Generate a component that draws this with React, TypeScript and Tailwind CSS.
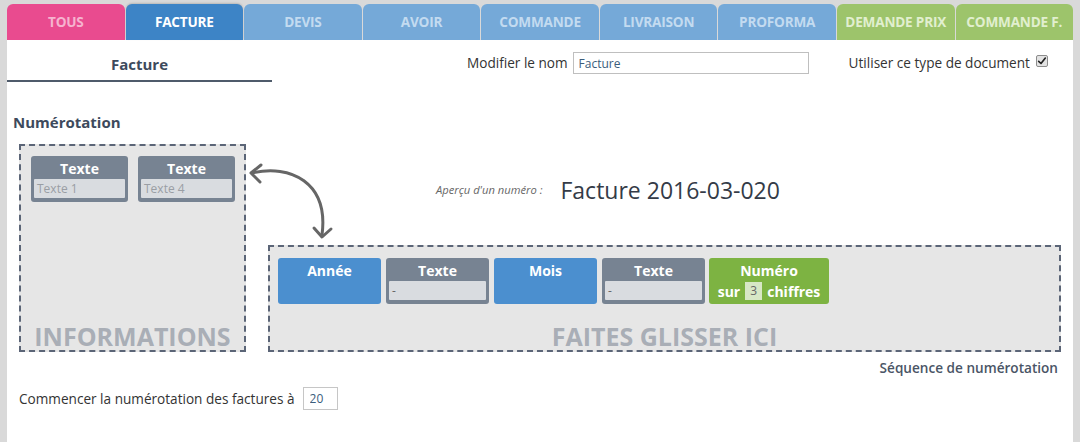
import React from 'react';

const tabs = [
  { label: 'TOUS', cls: 'bg-[#e94b8f] text-[#f6b3cf]' },
  { label: 'FACTURE', cls: 'bg-[#3d84c6] text-white shadow-[0_-1px_2px_rgba(0,0,0,0.15)] -mt-px' },
  { label: 'DEVIS', cls: 'bg-[#75a9d8] text-[#c3dbf0]' },
  { label: 'AVOIR', cls: 'bg-[#75a9d8] text-[#c3dbf0]' },
  { label: 'COMMANDE', cls: 'bg-[#75a9d8] text-[#c3dbf0]' },
  { label: 'LIVRAISON', cls: 'bg-[#75a9d8] text-[#c3dbf0]' },
  { label: 'PROFORMA', cls: 'bg-[#75a9d8] text-[#c3dbf0]' },
  { label: 'DEMANDE PRIX', cls: 'bg-[#9dc46b] text-[#e1efcf]' },
  { label: 'COMMANDE F.', cls: 'bg-[#9dc46b] text-[#e1efcf]' },
];

const TextTile: React.FC<{ value: string; width: string; muted?: boolean }> = ({ value, width, muted }) => (
  <div className={`${width} h-[46px] bg-[#778392] rounded-[3px] px-[3px] pt-[4px] flex flex-col`}>
    <div className="text-white font-bold text-[14px] leading-[17px] text-center">Texte</div>
    <div className={`mt-[2px] h-[19px] bg-[#d9dce0] rounded-[1px] px-[3px] text-[12px] leading-[19px] ${muted ? 'text-[#9a9ea4]' : 'text-[#666]'}`}>
      {value}
    </div>
  </div>
);

const BlueTile: React.FC<{ label: string }> = ({ label }) => (
  <div className="w-[103px] h-[46px] bg-[#4b8fcf] rounded-[3px] pt-[4px] text-white font-bold text-[14px] leading-[17px] text-center">
    {label}
  </div>
);

const App: React.FC = () => {
  return (
    <div className="relative w-[1080px] h-[442px] bg-[#d9d9d9] px-[7px] pt-[4px] font-['Open_Sans',sans-serif] overflow-hidden">
      {/* Tabs */}
      <div className="flex gap-px h-[36px] items-end">
        {tabs.map(t => (
          <div
            key={t.label}
            className={`flex-1 h-[36px] rounded-t-[6px] flex items-center justify-center font-bold text-[13.6px] tracking-[-0.2px] ${t.cls}`}
          >
            {t.label}
          </div>
        ))}
      </div>

      {/* Panel */}
      <div className="bg-white h-[402px] text-[#333]">
        {/* Header row */}
        <div className="flex items-start h-[42px]">
          <div className="w-[265px] h-[42px] flex items-center justify-center border-b-[2px] border-[#4f5b6b] text-[15px] font-bold text-[#3d4a5c] pt-[8px]">
            Facture
          </div>
          <div className="ml-[195px] flex items-center text-[13.6px] mt-[12px]">
            <span>Modifier le nom</span>
            <input
              readOnly
              value="Facture"
              className="ml-[5px] w-[236px] h-[22px] border border-[#bfbfbf] px-[5px] text-[12px] text-[#3b5d7c] outline-none"
            />
            <span className="ml-[40px]">Utiliser ce type de document</span>
            <span className="ml-[6px] w-[12px] h-[12px] border border-[#8c8c8c] rounded-[2px] bg-[#e3e3e3] flex items-center justify-center -mt-[4px]">
              <svg viewBox="0 0 12 12" className="w-[10px] h-[10px]">
                <path d="M2 6.5 L4.8 9 L10 2.5" stroke="#222" strokeWidth="2" fill="none" strokeLinecap="round" strokeLinejoin="round" />
              </svg>
            </span>
          </div>
        </div>

        <div className="pl-[6px] pt-[30px] text-[15px] font-bold text-[#3d4a5c] leading-[20px]">Numérotation</div>

        {/* Main area */}
        <div className="flex mt-[12px] pl-[12px] pr-[12px]">
          <div className="w-[227px] h-[208px] bg-[#e6e6e6] border-2 border-dashed border-[#5b6577] flex flex-col">
            <div className="flex gap-[10px] pl-[10px] pt-[10px]">
              <TextTile value="Texte 1" width="w-[97px]" muted />
              <TextTile value="Texte 4" width="w-[97px]" muted />
            </div>
            <div className="mt-auto pb-[1px] text-center text-[25px] font-bold text-[#a9aeb6] leading-[26px]">INFORMATIONS</div>
          </div>

          <div className="flex-1 ml-[22px] flex flex-col">
            <div className="flex items-center h-[101px] pl-[168px] pb-[8px]">
              <span className="italic text-[11.2px] text-[#666]">Aperçu d'un numéro :</span>
              <span className="ml-[18px] text-[23px] text-[#343b47]">Facture 2016-03-020</span>
            </div>
            <div className="h-[107px] bg-[#e6e6e6] border-2 border-dashed border-[#5b6577] flex flex-col">
              <div className="flex gap-[5px] pl-[8px] pt-[11px]">
                <BlueTile label="Année" />
                <TextTile value="-" width="w-[103px]" />
                <BlueTile label="Mois" />
                <TextTile value="-" width="w-[103px]" />
                <div className="w-[120px] h-[46px] bg-[#7db342] rounded-[3px] pt-[4px] text-white font-bold text-[14px] leading-[17px] text-center -ml-px">
                  <div>Numéro</div>
                  <div className="flex items-center justify-center gap-[5px] mt-[3px]">
                    <span>sur</span>
                    <span className="w-[17px] h-[18px] bg-[#d7e7c6] text-[#666] font-normal text-[12px] leading-[18px]">3</span>
                    <span>chiffres</span>
                  </div>
                </div>
              </div>
              <div className="mt-auto pb-[1px] text-center text-[25px] font-bold text-[#a9aeb6] leading-[26px]">FAITES GLISSER ICI</div>
            </div>
            <div className="text-right text-[13.6px] font-semibold text-[#4a5566] pt-[6px] pr-[3px]">Séquence de numérotation</div>
          </div>
        </div>

        <div className="flex items-center pl-[12px] mt-[9px] text-[13.6px]">
          <span>Commencer la numérotation des factures à</span>
          <input
            readOnly
            value="20"
            className="ml-[8px] w-[35px] h-[23px] border border-[#c6c6c6] px-[6px] text-[12px] text-[#3b5d7c] outline-none"
          />
        </div>
      </div>

      {/* Curved double arrow */}
      <svg className="absolute left-[245px] top-[160px] w-[95px] h-[85px]" viewBox="0 0 95 85" fill="none">
        <path d="M7 13 C 45 4, 84 22, 77 75" stroke="#666" strokeWidth="3" strokeLinecap="round" />
        <path d="M16 5 L6 13 L15 22" stroke="#666" strokeWidth="3" strokeLinecap="round" strokeLinejoin="round" />
        <path d="M69 68 L77 77 L86 69" stroke="#666" strokeWidth="3" strokeLinecap="round" strokeLinejoin="round" />
      </svg>
    </div>
  );
};

export default App;
